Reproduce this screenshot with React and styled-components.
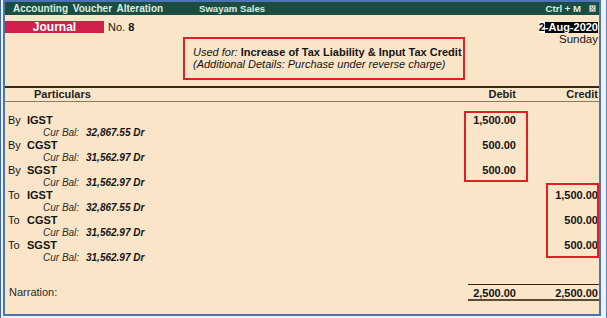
import React from "react";
import styled, { createGlobalStyle } from "styled-components";

const GlobalStyle = createGlobalStyle`
  html, body { margin: 0; padding: 0; background: #ffffff; }
  body { font-family: "Liberation Sans", Arial, sans-serif; color: #141414; }
  * { box-sizing: border-box; }
`;

const Frame = styled.div`
  width: 607px;
  height: 318px;
  border-left: 1px solid #3f68a8;
  border-right: 1px solid #5a80bd;
  padding: 0 5px 2px 2px;
  background: #eef2f8;
`;

const Window = styled.div`
  height: 316px;
  border: 2px solid #4a74b4;
  background: #fbe5c9;
  display: flex;
  flex-direction: column;
  position: relative;
`;

const TitleBar = styled.div`
  height: 13px;
  background: #1b4e41;
  color: #d9efe2;
  font-size: 9.6px;
  font-weight: bold;
  display: flex;
  align-items: center;
  padding-left: 8px;
  white-space: nowrap;
`;

const TitleMode = styled.span`
  width: 186px;
  font-size: 10px;
  word-spacing: 2px;
`;

const TitleCompany = styled.span`
  flex: 1;
`;

const Shortcut = styled.span`
  margin-right: 8px;
`;

const CloseBox = styled.span`
  width: 7px;
  height: 7px;
  margin-right: 3px;
  background: #cfd6d2;
  border: 1px solid #8fa39a;
  display: flex;
  align-items: center;
  justify-content: center;
`;

const Head = styled.div`
  display: grid;
  grid-template-columns: 178px 282px 1fr;
  padding: 6px 1px 6px 0;
`;

const VoucherType = styled.div`
  display: flex;
  align-items: center;
  height: 12px;
`;

const JournalTag = styled.div`
  width: 99px;
  height: 12px;
  background: #d0214c;
  color: #ffffff;
  font-weight: bold;
  font-size: 12px;
  line-height: 12px;
  text-align: center;
`;

const VoucherNo = styled.span`
  margin-left: 4px;
  font-size: 11px;
  line-height: 12px;
  b { font-weight: bold; }
`;

const UsedFor = styled.div`
  margin-top: 16px;
  height: 43px;
  border: 2px solid #e11f26;
  padding: 8px 0 0 8px;
  font-size: 11px;
  line-height: 11.5px;
  white-space: nowrap;
  i { font-style: italic; }
  b { font-weight: bold; }
`;

const DateCol = styled.div`
  display: flex;
  flex-direction: column;
  align-items: flex-end;
`;

const DateChip = styled.div`
  margin-top: 1px;
  background: #000000;
  color: #ffffff;
  font-weight: bold;
  font-size: 11px;
  line-height: 11px;
`;

const Cursor = styled.span`
  background: #ffffff;
  color: #000000;
`;

const Weekday = styled.div`
  font-size: 11.5px;
  line-height: 12px;
`;

const Rule = styled.div`
  height: 2px;
  background: #3a2818;
`;

const Columns = styled.div`
  display: grid;
  grid-template-columns: 1fr 50px 82px;
  padding-right: 1px;
`;

const ColumnHead = styled(Columns)`
  height: 14px;
  font-size: 11px;
  font-weight: bold;
  line-height: 13px;
  color: #1e1e1e;
  border-bottom: 1px solid #8b7a66;
`;

const HeadCell = styled.div`
  text-align: ${(p) => (p.$right ? "right" : "left")};
  padding-left: ${(p) => (p.$right ? "0" : "29px")};
  white-space: nowrap;
`;

const Body = styled.div`
  position: relative;
  padding-top: 12px;
`;

const EntryLine = styled(Columns)`
  font-size: 11px;
  line-height: 12.5px;
  height: 12.5px;
`;

const Particular = styled.div`
  display: flex;
  padding-left: 3px;
  white-space: nowrap;
`;

const Prefix = styled.span`
  width: 19px;
`;

const Ledger = styled.span`
  font-weight: bold;
`;

const Amount = styled.div`
  text-align: right;
  font-weight: bold;
  white-space: nowrap;
`;

const BalLine = styled.div`
  font-size: 10px;
  line-height: 12.5px;
  height: 12.5px;
  padding-left: 38px;
  font-style: italic;
  display: flex;
  white-space: nowrap;
`;

const BalLabel = styled.span`
  width: 43px;
  color: #2a2a2a;
`;

const BalValue = styled.span`
  font-weight: bold;
`;

const Highlight = styled.div`
  position: absolute;
  border: 2px solid #e11f26;
  left: ${(p) => p.$left}px;
  top: ${(p) => p.$top}px;
  width: ${(p) => p.$width}px;
  height: ${(p) => p.$height}px;
`;

const Footer = styled(Columns)`
  margin-top: 20px;
  font-size: 11px;
  line-height: 11px;
`;

const Narration = styled.div`
  padding: 3px 0 0 4px;
  color: #2a2a2a;
`;

const Totals = styled.div`
  grid-column: 2 / span 2;
  margin-left: 2px;
  display: grid;
  grid-template-columns: 48px 82px;
  border-top: 1px solid #2e2418;
  border-bottom: 2px solid #5b4a36;
  padding-top: 3px;
  font-weight: bold;
  margin-right: -1px;
  padding-right: 1px;
`;

const entries = [
  { side: "By", name: "IGST", bal: "32,867.55 Dr", debit: "1,500.00" },
  { side: "By", name: "CGST", bal: "31,562.97 Dr", debit: "500.00" },
  { side: "By", name: "SGST", bal: "31,562.97 Dr", debit: "500.00" },
  { side: "To", name: "IGST", bal: "32,867.55 Dr", credit: "1,500.00" },
  { side: "To", name: "CGST", bal: "31,562.97 Dr", credit: "500.00" },
  { side: "To", name: "SGST", bal: "31,562.97 Dr", credit: "500.00" },
];

export default function App() {
  return (
    <>
      <GlobalStyle />
      <Frame>
        <Window>
          <TitleBar>
            <TitleMode>Accounting Voucher Alteration</TitleMode>
            <TitleCompany>Swayam Sales</TitleCompany>
            <Shortcut>Ctrl + M</Shortcut>
            <CloseBox>
              <svg width="5" height="5" viewBox="0 0 5 5">
                <path d="M0.5 0.5L4.5 4.5M4.5 0.5L0.5 4.5" stroke="#6d7a74" strokeWidth="1" />
              </svg>
            </CloseBox>
          </TitleBar>

          <Head>
            <VoucherType>
              <JournalTag>Journal</JournalTag>
              <VoucherNo>
                No. <b>8</b>
              </VoucherNo>
            </VoucherType>
            <UsedFor>
              <div>
                <i>Used for:</i> <b>Increase of Tax Liability &amp; Input Tax Credit</b>
              </div>
              <div>
                <i>(Additional Details: Purchase under reverse charge)</i>
              </div>
            </UsedFor>
            <DateCol>
              <DateChip>
                <Cursor>2</Cursor>-Aug-2020
              </DateChip>
              <Weekday>Sunday</Weekday>
            </DateCol>
          </Head>

          <Rule />

          <ColumnHead>
            <HeadCell>Particulars</HeadCell>
            <HeadCell $right>Debit</HeadCell>
            <HeadCell $right>Credit</HeadCell>
          </ColumnHead>

          <Body>
            {entries.map((e, i) => (
              <div key={i}>
                <EntryLine>
                  <Particular>
                    <Prefix>{e.side}</Prefix>
                    <Ledger>{e.name}</Ledger>
                  </Particular>
                  <Amount>{e.debit || ""}</Amount>
                  <Amount>{e.credit || ""}</Amount>
                </EntryLine>
                <BalLine>
                  <BalLabel>Cur Bal:</BalLabel>
                  <BalValue>{e.bal}</BalValue>
                </BalLine>
              </div>
            ))}
            <Highlight $left={459} $top={9} $width={64} $height={71} />
            <Highlight $left={541} $top={81} $width={53} $height={75} />
          </Body>

          <Footer>
            <Narration>Narration:</Narration>
            <Totals>
              <Amount>2,500.00</Amount>
              <Amount>2,500.00</Amount>
            </Totals>
          </Footer>
        </Window>
      </Frame>
    </>
  );
}
